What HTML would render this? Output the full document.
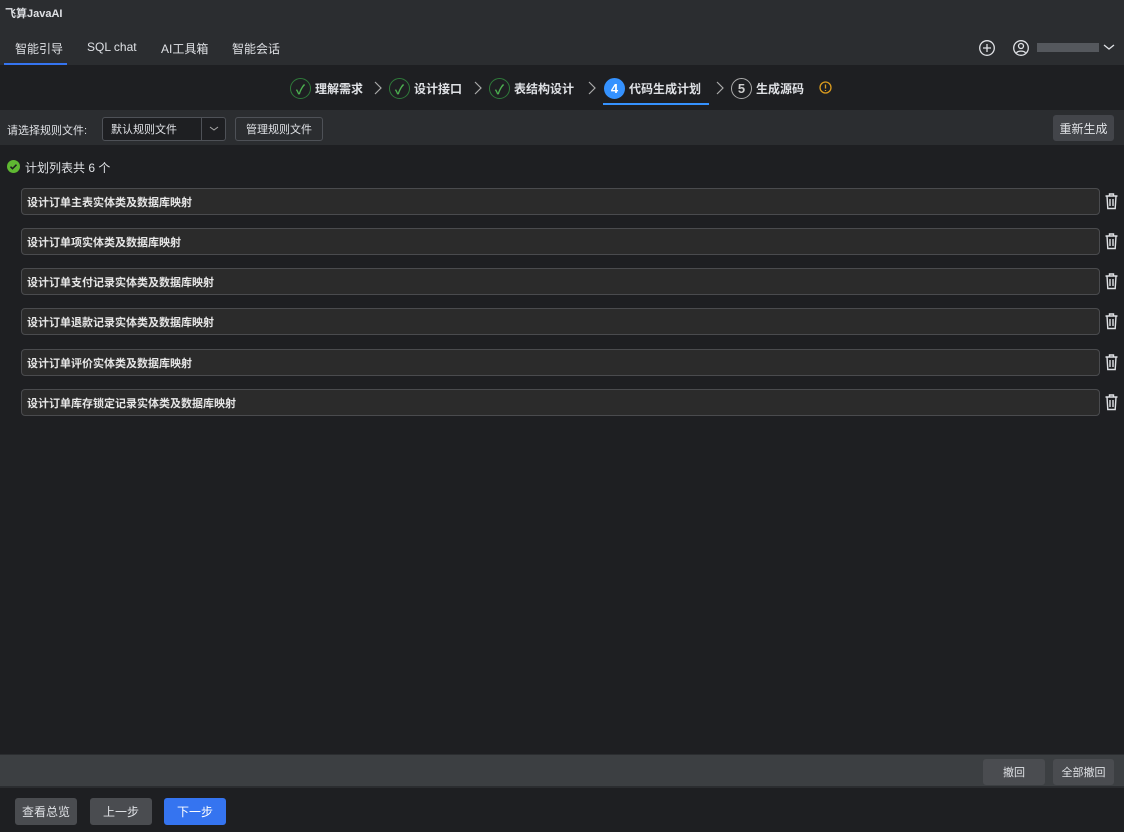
<!DOCTYPE html>
<html><head><meta charset="utf-8"><style>
*{margin:0;padding:0;box-sizing:border-box}
body{width:1124px;height:832px;background:#1e1f22;font-family:"Liberation Sans","Noto Sans CJK SC",sans-serif;color:#dfe1e5;position:relative;overflow:hidden;font-size:12px}
.abs{position:absolute}
.top{left:0;top:0;width:1124px;height:65px;background:#2b2d30}
.tab{top:40px;font-size:12px;color:#dfe1e5}
.steps{top:65px;height:45px;width:1124px;background:#1e1f22}
.st{top:76px;height:24px;display:flex;align-items:center;font-size:12px;font-weight:bold;color:#dfe1e5}
.circ{width:21px;height:21px;border-radius:50%;border:1.5px solid #2f7a3a;display:flex;align-items:center;justify-content:center;margin-right:4px;color:#4caf50;font-size:13px}
.tool{top:110px;height:35px;width:1124px;background:#2b2d30}
.btn{border:1px solid #4e5157;border-radius:3px;background:#2b2d30;color:#dfe1e5;font-size:11px;display:flex;align-items:center;justify-content:center}
.row{left:21px;width:1079px;height:27px;background:#2b2b2b;border:1px solid #4a4b4e;border-radius:4px;font-size:11px;font-weight:bold;padding-left:5px;display:flex;align-items:center;color:#e6e6e6}
.trash{left:1104px;width:15px;height:18px}
.chev{top:81px}
</style></head><body>
<div class="abs top"></div>
<div class="abs" style="left:5px;top:5px;font-size:11px;font-weight:bold">飞算JavaAI</div>
<div class="abs tab" style="left:15px">智能引导</div>
<div class="abs" style="left:4px;top:63px;width:63px;height:2px;background:#3574f0"></div>
<div class="abs tab" style="left:87px">SQL chat</div>
<div class="abs tab" style="left:161px">AI工具箱</div>
<div class="abs tab" style="left:232px">智能会话</div>
<svg class="abs" style="left:978px;top:39px" width="18" height="18" viewBox="0 0 18 18"><circle cx="9" cy="9" r="7.3" fill="none" stroke="#dfe1e5" stroke-width="1.3"/><path d="M9 5v8M5 9h8" stroke="#dfe1e5" stroke-width="1.3"/></svg>
<svg class="abs" style="left:1012px;top:39px" width="18" height="18" viewBox="0 0 18 18"><circle cx="9" cy="9" r="7.3" fill="none" stroke="#dfe1e5" stroke-width="1.3"/><circle cx="9" cy="7" r="2.5" fill="none" stroke="#dfe1e5" stroke-width="1.3"/><path d="M4.5 14c1-2.5 8-2.5 9 0" fill="none" stroke="#dfe1e5" stroke-width="1.3"/></svg>
<div class="abs" style="left:1037px;top:43px;width:62px;height:9px;background:#55585d"></div>
<svg class="abs" style="left:1103px;top:42px" width="12" height="10"><path d="M1 3l5 4 5-4" fill="none" stroke="#dfe1e5" stroke-width="1.3"/></svg>
<div class="abs steps"></div>
<div class="abs st" style="left:290px"><span class="circ">✓</span>理解需求</div>
<svg class="abs chev" style="left:373px" width="10" height="14"><path d="M2 1l6 6-6 6" fill="none" stroke="#aaa" stroke-width="1.2"/></svg>
<div class="abs st" style="left:389px"><span class="circ">✓</span>设计接口</div>
<svg class="abs chev" style="left:473px" width="10" height="14"><path d="M2 1l6 6-6 6" fill="none" stroke="#aaa" stroke-width="1.2"/></svg>
<div class="abs st" style="left:489px"><span class="circ">✓</span>表结构设计</div>
<svg class="abs chev" style="left:587px" width="10" height="14"><path d="M2 1l6 6-6 6" fill="none" stroke="#aaa" stroke-width="1.2"/></svg>
<div class="abs st" style="left:604px"><span class="circ" style="background:#3592ff;border-color:#3592ff;color:#fff">4</span>代码生成计划</div>
<div class="abs" style="left:603px;top:103px;width:106px;height:2px;background:#3592ff"></div>
<svg class="abs chev" style="left:715px" width="10" height="14"><path d="M2 1l6 6-6 6" fill="none" stroke="#aaa" stroke-width="1.2"/></svg>
<div class="abs st" style="left:731px"><span class="circ" style="border-color:#aaa;color:#ccc">5</span>生成源码</div>
<svg class="abs" style="left:819px;top:81px" width="13" height="13"><circle cx="6.5" cy="6.5" r="5.5" fill="none" stroke="#d99a1e" stroke-width="1.3"/><path d="M6.5 3.5v4M6.5 9v1" stroke="#d99a1e" stroke-width="1.3"/></svg>
<div class="abs tool"></div>
<div class="abs" style="left:7px;top:122px;font-size:11px">请选择规则文件:</div>
<div class="abs btn" style="left:102px;top:117px;width:124px;height:24px;justify-content:flex-start;padding-left:8px;background:#1e1f22">默认规则文件</div>
<div class="abs" style="left:201px;top:118px;width:1px;height:22px;background:#4e5157"></div>
<svg class="abs" style="left:209px;top:125px" width="10" height="8"><path d="M1 2l4 3 4-3" fill="none" stroke="#aaa"/></svg>
<div class="abs btn" style="left:235px;top:117px;width:88px;height:24px">管理规则文件</div>
<div class="abs btn" style="left:1053px;top:115px;width:61px;height:26px;background:#43454a;border-color:#43454a;font-size:12px">重新生成</div>
<svg class="abs" style="left:7px;top:160px" width="13" height="13"><circle cx="6.5" cy="6.5" r="6.5" fill="#5fb832"/><path d="M3.5 6.7l2 2 4-4" fill="none" stroke="#1e1f22" stroke-width="1.5"/></svg>
<div class="abs" style="left:25px;top:159px;font-size:12px">计划列表共 6 个</div>
<div class="abs row" style="top:188px">设计订单主表实体类及数据库映射</div>
<div class="abs row" style="top:228px">设计订单项实体类及数据库映射</div>
<div class="abs row" style="top:268px">设计订单支付记录实体类及数据库映射</div>
<div class="abs row" style="top:308px">设计订单退款记录实体类及数据库映射</div>
<div class="abs row" style="top:349px">设计订单评价实体类及数据库映射</div>
<div class="abs row" style="top:389px">设计订单库存锁定记录实体类及数据库映射</div>
<svg width="0" height="0" style="position:absolute"><defs><g id="t"><path d="M1.5 4h12M5.5 4V2h4v2M3 4l.8 12.5h7.4L12 4M6 7v7M9 7v7" fill="none" stroke="#dfe1e5" stroke-width="1.4"/></g></defs></svg>
<svg class="abs trash" style="top:192px" viewBox="0 0 15 18"><use href="#t"/></svg>
<svg class="abs trash" style="top:232px" viewBox="0 0 15 18"><use href="#t"/></svg>
<svg class="abs trash" style="top:272px" viewBox="0 0 15 18"><use href="#t"/></svg>
<svg class="abs trash" style="top:312px" viewBox="0 0 15 18"><use href="#t"/></svg>
<svg class="abs trash" style="top:353px" viewBox="0 0 15 18"><use href="#t"/></svg>
<svg class="abs trash" style="top:393px" viewBox="0 0 15 18"><use href="#t"/></svg>
<div class="abs" style="left:0;top:754px;width:1124px;height:34px;background:#3c3f42;border-top:1px solid #2b2d30;border-bottom:2px solid #2b2d30"></div>
<div class="abs btn" style="left:983px;top:759px;width:62px;height:26px;background:#4a4c50;border-color:#4a4c50">撤回</div>
<div class="abs btn" style="left:1053px;top:759px;width:61px;height:26px;background:#4a4c50;border-color:#4a4c50">全部撤回</div>
<div class="abs btn" style="left:15px;top:798px;width:62px;height:27px;background:#4a4c50;border-color:#4a4c50;font-size:12px">查看总览</div>
<div class="abs btn" style="left:90px;top:798px;width:62px;height:27px;background:#4a4c50;border-color:#4a4c50;font-size:12px">上一步</div>
<div class="abs btn" style="left:164px;top:798px;width:62px;height:27px;background:#3574f0;border-color:#3574f0;color:#fff;font-size:12px">下一步</div>
</body></html>
